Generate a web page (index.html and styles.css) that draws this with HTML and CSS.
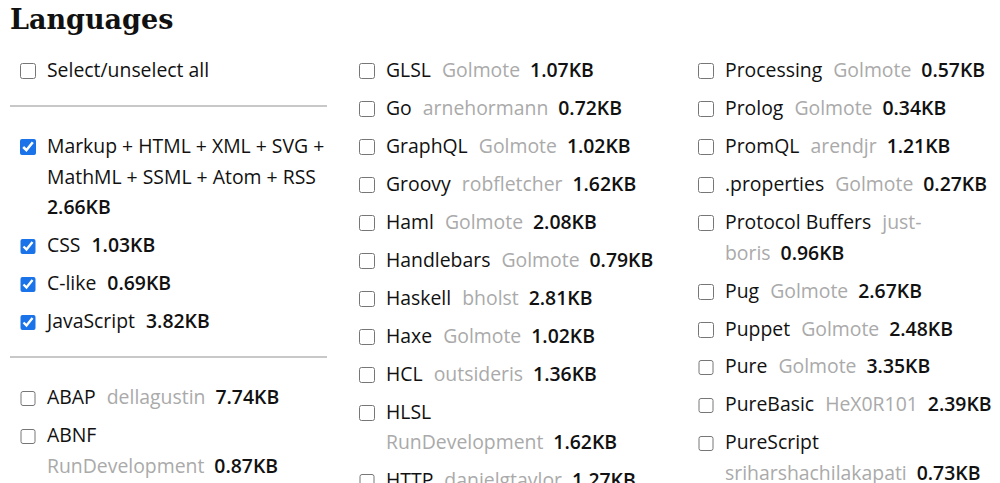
FILE: index.html
```html
<!DOCTYPE html>
<html lang="en">
<head>
<meta charset="utf-8">
<title>Languages</title>
<link rel="stylesheet" href="styles.css">
</head>
<body>
<section class="options">
  <h2 class="title">Languages</h2>
  <div class="columns">
    <div class="col">
      <label class="opt"><input type="checkbox">Select/unselect all</label>
      <div class="rule"></div>
      <label class="opt"><input type="checkbox" checked><span class="name">Markup + HTML + XML + SVG + MathML + SSML + Atom + RSS</span> <strong class="size">2.66KB</strong></label>
      <label class="opt"><input type="checkbox" checked><span class="name">CSS</span> <strong class="size">1.03KB</strong></label>
      <label class="opt"><input type="checkbox" checked><span class="name">C-like</span> <strong class="size">0.69KB</strong></label>
      <label class="opt"><input type="checkbox" checked><span class="name">JavaScript</span> <strong class="size">3.82KB</strong></label>
      <div class="rule"></div>
      <label class="opt"><input type="checkbox"><span class="name">ABAP</span> <a class="owner">dellagustin</a><strong class="size">7.74KB</strong></label>
      <label class="opt"><input type="checkbox"><span class="name">ABNF</span> <a class="owner">RunDevelopment</a><strong class="size">0.87KB</strong></label>
    </div>
    <div class="col">
      <label class="opt"><input type="checkbox"><span class="name">GLSL</span> <a class="owner">Golmote</a><strong class="size">1.07KB</strong></label>
      <label class="opt"><input type="checkbox"><span class="name">Go</span> <a class="owner">arnehormann</a><strong class="size">0.72KB</strong></label>
      <label class="opt"><input type="checkbox"><span class="name">GraphQL</span> <a class="owner">Golmote</a><strong class="size">1.02KB</strong></label>
      <label class="opt"><input type="checkbox"><span class="name">Groovy</span> <a class="owner">robfletcher</a><strong class="size">1.62KB</strong></label>
      <label class="opt"><input type="checkbox"><span class="name">Haml</span> <a class="owner">Golmote</a><strong class="size">2.08KB</strong></label>
      <label class="opt"><input type="checkbox"><span class="name">Handlebars</span> <a class="owner">Golmote</a><strong class="size">0.79KB</strong></label>
      <label class="opt"><input type="checkbox"><span class="name">Haskell</span> <a class="owner">bholst</a><strong class="size">2.81KB</strong></label>
      <label class="opt"><input type="checkbox"><span class="name">Haxe</span> <a class="owner">Golmote</a><strong class="size">1.02KB</strong></label>
      <label class="opt"><input type="checkbox"><span class="name">HCL</span> <a class="owner">outsideris</a><strong class="size">1.36KB</strong></label>
      <label class="opt"><input type="checkbox"><span class="name">HLSL</span> <a class="owner">RunDevelopment</a><strong class="size">1.62KB</strong></label>
      <label class="opt"><input type="checkbox"><span class="name">HTTP</span> <a class="owner">danielgtaylor</a><strong class="size">1.27KB</strong></label>
    </div>
    <div class="col">
      <label class="opt"><input type="checkbox"><span class="name">Processing</span> <a class="owner">Golmote</a><strong class="size">0.57KB</strong></label>
      <label class="opt"><input type="checkbox"><span class="name">Prolog</span> <a class="owner">Golmote</a><strong class="size">0.34KB</strong></label>
      <label class="opt"><input type="checkbox"><span class="name">PromQL</span> <a class="owner">arendjr</a><strong class="size">1.21KB</strong></label>
      <label class="opt"><input type="checkbox"><span class="name">.properties</span> <a class="owner">Golmote</a><strong class="size">0.27KB</strong></label>
      <label class="opt"><input type="checkbox"><span class="name">Protocol Buffers</span> <a class="owner">just-boris</a><strong class="size">0.96KB</strong></label>
      <label class="opt"><input type="checkbox"><span class="name">Pug</span> <a class="owner">Golmote</a><strong class="size">2.67KB</strong></label>
      <label class="opt"><input type="checkbox"><span class="name">Puppet</span> <a class="owner">Golmote</a><strong class="size">2.48KB</strong></label>
      <label class="opt"><input type="checkbox"><span class="name">Pure</span> <a class="owner">Golmote</a><strong class="size">3.35KB</strong></label>
      <label class="opt"><input type="checkbox"><span class="name">PureBasic</span> <a class="owner">HeX0R101</a><strong class="size">2.39KB</strong></label>
      <label class="opt"><input type="checkbox"><span class="name">PureScript</span> <a class="owner">sriharshachilakapati</a><strong class="size">0.73KB</strong></label>
    </div>
  </div>
</section>
</body>
</html>
```
FILE: styles.css
```css
html, body {
  margin: 0;
  padding: 0;
  background: #fff;
  overflow: hidden;
}
body {
  font-family: "Open Sans", "Liberation Sans", sans-serif;
  font-size: 19.4px;
  color: #111;
}
.options {
  padding: 0 0 0 10px;
}
.title {
  font-family: "DejaVu Serif", serif;
  font-weight: bold;
  font-size: 27px;
  line-height: 34px;
  margin: 3px 0 0 0;
  color: #111;
}
.columns {
  display: grid;
  grid-template-columns: 317px 317px 317px;
  column-gap: 22px;
  margin-top: 18px;
}
.col {
  display: flex;
  flex-direction: column;
}
.opt {
  display: block;
  padding-left: 37px;
  line-height: 30.6px;
  margin-bottom: 7.4px;
}
.opt input {
  width: 15.6px;
  height: 15.6px;
  margin: 0 11.4px 0 -27px;
  vertical-align: -2px;
  accent-color: #1a73e8;
}
.rule {
  height: 2px;
  background: #c8c8c8;
  margin: 12px 0 24px 0;
}
.name {
  margin-right: 6px;
}
.owner {
  color: #aaa;
  margin-right: 10px;
}
.size {
  font-weight: 600;
}
```
